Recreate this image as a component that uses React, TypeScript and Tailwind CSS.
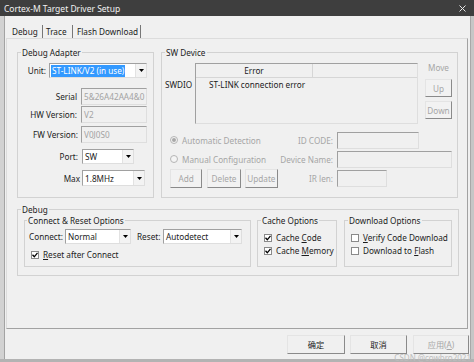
import React from "react";

function Arrow() {
  return (
    <div className="w-[11px] h-full bg-[#f3f3f3] border-l border-[#e2e2e2] flex items-center justify-center">
      <svg width="5" height="3" viewBox="0 0 5 3">
        <path d="M0 0H5L2.5 3Z" fill="#000" />
      </svg>
    </div>
  );
}

const sunken =
  "border border-t-[#a0a0a0] border-l-[#a0a0a0] border-r-[#dedede] border-b-[#dedede]";
const raised =
  "border border-t-[#e4e4e4] border-l-[#e4e4e4] border-r-[#8a8a8a] border-b-[#8a8a8a]";

function Select({ cls, children }: { cls: string; children: React.ReactNode }) {
  return (
    <div className={`${cls} flex bg-white ${sunken}`}>
      <div className="flex-1 flex items-center pl-[1px] overflow-hidden whitespace-nowrap">{children}</div>
      <Arrow />
    </div>
  );
}

function TextBox({ cls, text }: { cls: string; text?: string }) {
  return (
    <div className={`${cls} flex items-center pl-[2px] overflow-hidden whitespace-nowrap text-[#a3a3a3] bg-[#f0f0f0] ${sunken}`}>
      {text}
    </div>
  );
}

function Check({ checked }: { checked?: boolean }) {
  return (
    <div className="w-[8px] h-[8px] bg-white border border-[#8a8a8a] flex items-center justify-center">
      {checked && (
        <svg width="6" height="6" viewBox="0 0 6 6">
          <path d="M0.5 2.8L2.3 4.8L5.5 0.8" stroke="#000" strokeWidth="1.3" fill="none" />
        </svg>
      )}
    </div>
  );
}

function Radio({ on }: { on?: boolean }) {
  return (
    <div className="w-[8px] h-[8px] rounded-full border border-[#b5b5b5] bg-[#f4f4f4] flex items-center justify-center">
      {on && <div className="w-[4px] h-[4px] rounded-full bg-[#a8a8a8]" />}
    </div>
  );
}

function DisButton({ cls, children }: { cls: string; children: React.ReactNode }) {
  return (
    <div className={`${cls} flex items-center justify-center text-[#a6a6a6] bg-[#f2f2f2] ${raised}`}>{children}</div>
  );
}

export default function App() {
  return (
    <div className="w-[474px] h-[362px] overflow-hidden bg-[#f0f0f0] flex flex-col relative font-['Noto_Sans','Noto_Sans_CJK_SC',sans-serif] text-[8.2px] leading-[11px] text-[#1c1c1c]">
      {/* title bar */}
      <div className="h-[16px] bg-[#3e3e3e] flex items-center pl-[4px] pr-[8px] text-[#f2f2f2] text-[8.5px]">
        <span>Cortex-M Target Driver Setup</span>
        <svg className="ml-auto" width="7" height="7" viewBox="0 0 7 7">
          <path d="M0.5 0.5L6.5 6.5M6.5 0.5L0.5 6.5" stroke="#e8e8e8" strokeWidth="1" />
        </svg>
      </div>

      <div className="flex-1 flex">
        <div className="w-[5px] bg-[#d2d2d2] border-r border-[#a3a3a3]" />
        <div className="flex-1 flex flex-col">
          {/* tabs */}
          <div className="h-[22px] flex items-end">
            <div className="ml-[3px] w-[35px] h-[13px] pl-[4px] flex items-center border-r border-[#777]">Debug</div>
            <div className="w-[30px] h-[13px] pl-[3px] flex items-center border-r border-[#777]">Trace</div>
            <div className="w-[68px] h-[13px] pl-[4px] flex items-center border-r border-[#777]">Flash Download</div>
          </div>

          {/* panel */}
          <div className="ml-[1px] w-[462px] h-[291px] border border-t-[#dcdcdc] border-l-[#dcdcdc] border-r-[#a2a2a2] border-b-[#a2a2a2] pt-[8px]">
            <div className="flex ml-[10px]">
              {/* Debug Adapter */}
              <fieldset className="w-[137px] h-[151px] border border-[#d2d2d2] m-0 p-0 min-w-0">
                <legend className="ml-[3px] px-[1px] leading-[11px]">Debug Adapter</legend>
                <div className="mt-[5px] h-[15px] flex items-center">
                  <div className="w-[28px] text-right">Unit:</div>
                  <Select cls="ml-[3px] w-[98px] h-[15px]">
                    <span className="bg-[#3399ff] text-white px-[1px] leading-[12px]">ST-LINK/V2 (in use)</span>
                  </Select>
                </div>
                <div className="mt-[10px] h-[17px] flex items-center">
                  <div className="w-[59px] text-right">Serial</div>
                  <TextBox cls="ml-[4px] w-[66px] h-[17px]" text="5&26A42AA4&0" />
                </div>
                <div className="mt-[1px] h-[17px] flex items-center">
                  <div className="w-[59px] text-right">HW Version:</div>
                  <TextBox cls="ml-[4px] w-[66px] h-[17px]" text="V2" />
                </div>
                <div className="mt-[3px] h-[17px] flex items-center">
                  <div className="w-[60px] text-right">FW Version:</div>
                  <TextBox cls="ml-[3px] w-[66px] h-[17px]" text="V0J0S0" />
                </div>
                <div className="mt-[6px] h-[15px] flex items-center">
                  <div className="w-[60px] text-right">Port:</div>
                  <Select cls="ml-[4px] w-[52px] h-[15px]">
                    <span className="pl-[1px]">SW</span>
                  </Select>
                </div>
                <div className="mt-[6px] h-[16px] flex items-center">
                  <div className="w-[62px] text-right">Max</div>
                  <Select cls="ml-[2px] w-[63px] h-[16px]">
                    <span className="pl-[1px]">1.8MHz</span>
                  </Select>
                </div>
              </fieldset>

              {/* SW Device */}
              <fieldset className="ml-[7px] w-[297px] h-[151px] border border-[#d2d2d2] m-0 p-0 min-w-0">
                <legend className="ml-[3px] px-[1px] leading-[11px]">SW Device</legend>
                <div className="mt-[5px] flex">
                  <div className="ml-[3px] w-[30px] pt-[16px]">SWDIO</div>
                  <div className={`w-[223px] h-[61px] bg-[#f0f0f0] ${sunken}`}>
                    <div className="h-[14px] flex border-b border-[#d6d6d6]">
                      <div className="w-[117px] flex items-center justify-center border-r border-[#d6d6d6]">Error</div>
                      <div className="flex-1" />
                    </div>
                    <div className="pl-[13px] pt-[1px]">ST-LINK connection error</div>
                  </div>
                  <div className="ml-[7px] w-[27px] flex flex-col items-center">
                    <div className="text-[#a6a6a6] mt-[-1px]">Move</div>
                    <DisButton cls="mt-[6px] w-[27px] h-[18px]">Up</DisButton>
                    <DisButton cls="mt-[4px] w-[27px] h-[18px]">Down</DisButton>
                  </div>
                </div>
                <div className="mt-[7px] flex">
                  <div className="ml-[8px] w-[108px] flex flex-col text-[#a6a6a6]">
                    <div className="h-[18px] flex items-center">
                      <Radio on />
                      <span className="ml-[4px]">Automatic Detection</span>
                    </div>
                    <div className="mt-[1px] h-[18px] flex items-center">
                      <Radio />
                      <span className="ml-[4px]">Manual Configuration</span>
                    </div>
                    <div className="mt-[1px] h-[19px] flex">
                      <DisButton cls="w-[36px] h-[19px]">Add</DisButton>
                      <DisButton cls="ml-[5px] w-[37px] h-[19px]">Delete</DisButton>
                      <DisButton cls="ml-[4px] w-[37px] h-[19px]">Update</DisButton>
                    </div>
                  </div>
                  <div className="flex flex-col text-[#a6a6a6]">
                    <div className="h-[18px] flex items-center">
                      <div className="w-[55px] text-right">ID CODE:</div>
                      <TextBox cls="ml-[4px] w-[82px] h-[17px]" />
                    </div>
                    <div className="mt-[1px] h-[18px] flex items-center">
                      <div className="w-[55px] text-right">Device Name:</div>
                      <TextBox cls="ml-[4px] w-[115px] h-[17px]" />
                    </div>
                    <div className="mt-[1px] h-[19px] flex items-center">
                      <div className="w-[55px] text-right">IR len:</div>
                      <TextBox cls="ml-[4px] w-[50px] h-[17px]" />
                    </div>
                  </div>
                </div>
              </fieldset>
            </div>

            {/* Debug group */}
            <fieldset className="mt-[6px] ml-[10px] w-[442px] h-[72px] border border-[#d2d2d2] m-0 p-0 min-w-0">
              <legend className="ml-[3px] px-[1px] leading-[11px]">Debug</legend>
              <div className="flex ml-[6px]">
                <fieldset className="w-[227px] h-[52px] border border-[#d2d2d2] m-0 p-0 min-w-0">
                  <legend className="ml-[2px] px-[1px] leading-[11px]">Connect &amp; Reset Options</legend>
                  <div className="mt-[3px] h-[15px] flex items-center">
                    <div className="ml-[4px] w-[34px]">Connect:</div>
                    <Select cls="ml-[2px] w-[66px] h-[15px]">
                      <span className="pl-[1px]">Normal</span>
                    </Select>
                    <div className="ml-[6px] w-[25px]">Reset:</div>
                    <Select cls="ml-[1px] w-[79px] h-[15px]">
                      <span className="pl-[1px]">Autodetect</span>
                    </Select>
                  </div>
                  <div className="mt-[5px] flex items-center ml-[6px]">
                    <Check checked />
                    <span className="ml-[4px]">
                      <span className="underline">R</span>eset after Connect
                    </span>
                  </div>
                </fieldset>
                <fieldset className="ml-[6px] w-[80px] h-[52px] border border-[#d2d2d2] m-0 p-0 min-w-0">
                  <legend className="ml-[3px] px-[1px] leading-[11px]">Cache Options</legend>
                  <div className="mt-[6px] flex items-center ml-[6px]">
                    <Check checked />
                    <span className="ml-[4px]">
                      Cache <span className="underline">C</span>ode
                    </span>
                  </div>
                  <div className="mt-[2px] flex items-center ml-[6px]">
                    <Check checked />
                    <span className="ml-[4px]">
                      Cache <span className="underline">M</span>emory
                    </span>
                  </div>
                </fieldset>
                <fieldset className="ml-[7px] w-[108px] h-[52px] border border-[#d2d2d2] m-0 p-0 min-w-0">
                  <legend className="ml-[3px] px-[1px] leading-[11px]">Download Options</legend>
                  <div className="mt-[6px] flex items-center ml-[6px] whitespace-nowrap">
                    <Check />
                    <span className="ml-[4px]">
                      <span className="underline">V</span>erify Code Download
                    </span>
                  </div>
                  <div className="mt-[2px] flex items-center ml-[6px] whitespace-nowrap">
                    <Check />
                    <span className="ml-[4px]">
                      Download to <span className="underline">F</span>lash
                    </span>
                  </div>
                </fieldset>
              </div>
            </fieldset>
          </div>

          {/* bottom buttons */}
          <div className="mt-[6px] flex justify-end pr-[1px]">
            <div className={`w-[58px] h-[19px] flex items-center justify-center bg-[#f0f0f0] ${raised} border-r-[#6a6a6a] border-b-[#6a6a6a]`}>确定</div>
            <div className={`ml-[5px] w-[57px] h-[19px] flex items-center justify-center bg-[#f0f0f0] ${raised} border-r-[#6a6a6a] border-b-[#6a6a6a]`}>取消</div>
            <div className={`ml-[6px] w-[56px] h-[19px] flex items-center justify-center bg-[#f0f0f0] text-[#a6a6a6] ${raised}`}>
              应用(<span className="underline">A</span>)
            </div>
          </div>
        </div>
        <div className="w-[4px] bg-[#c6c6c6] border-l border-[#a8a8a8]" />
      </div>
      <div className="h-[3px] bg-[#b3b3b3]" />
      <div className="absolute right-[3px] bottom-[0px] text-[8px] leading-[9px] text-[#bdbdbd]">CSDN @cowbro2021</div>
    </div>
  );
}
